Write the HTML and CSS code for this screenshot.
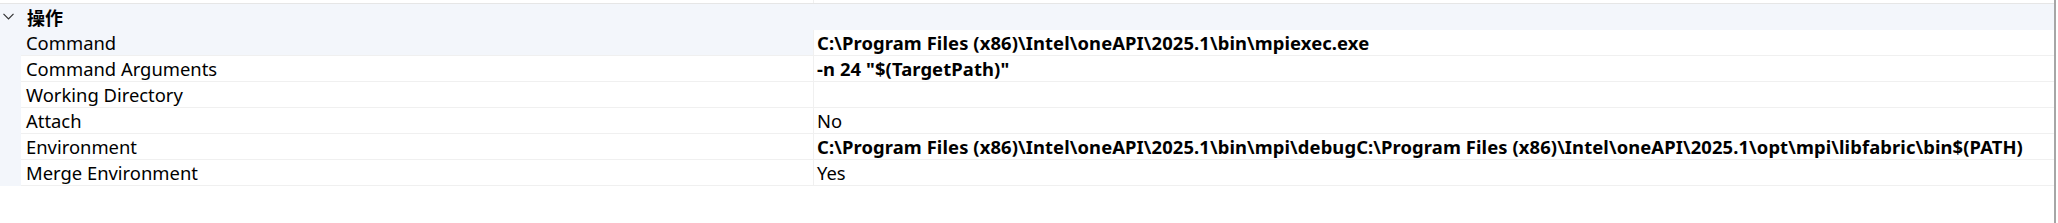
FILE: index.html
```html
<!DOCTYPE html>
<html>
<head>
    <title>Debugging Properties</title>
    <link rel="stylesheet" href="styles.css">
</head>
<body>
    <div class="panel">
        <div class="top-strip"><span class="strip-name"></span><span class="strip-value"></span></div>

        <div class="category">
            <svg class="chevron" width="11" height="7" viewBox="0 0 11 7">
                <path d="M0.5 0.8 L5.5 5.8 L10.5 0.8" fill="none" stroke="#333" stroke-width="1.2"/>
            </svg>
            <span class="category-title">操作</span>
        </div>

        <div class="props">
            <div class="gutter"></div>
            <div class="rows">
                <div class="row selected">
                    <div class="name">Command</div>
                    <div class="value strong">C:\Program Files (x86)\Intel\oneAPI\2025.1\bin\mpiexec.exe</div>
                </div>
                <div class="row">
                    <div class="name">Command Arguments</div>
                    <div class="value strong">-n 24 "$(TargetPath)"</div>
                </div>
                <div class="row">
                    <div class="name">Working Directory</div>
                    <div class="value"></div>
                </div>
                <div class="row">
                    <div class="name">Attach</div>
                    <div class="value">No</div>
                </div>
                <div class="row">
                    <div class="name">Environment</div>
                    <div class="value strong">C:\Program Files (x86)\Intel\oneAPI\2025.1\bin\mpi\debugC:\Program Files (x86)\Intel\oneAPI\2025.1\opt\mpi\libfabric\bin$(PATH)</div>
                </div>
                <div class="row">
                    <div class="name">Merge Environment</div>
                    <div class="value">Yes</div>
                </div>
            </div>
        </div>
    </div>
</body>
</html>
```

FILE: styles.css
```css
body { margin: 0; background: #fff; color: #000; font-family: "Noto Sans", "Noto Sans CJK SC", sans-serif; font-size: 18.4px; }

.panel { width: 2054px; height: 223px; border-right: 2px solid #a6a6a6; }

.top-strip { display: flex; height: 3px; border-bottom: 1px solid #e6e6e6; }
.strip-name { width: 813px; border-right: 1px solid #f0f0f0; }

.category { display: flex; align-items: center; height: 26px; background: #f3f6fb; }
.chevron { margin-left: 3px; margin-right: 13px; margin-top: -2px; }
.category-title { font-weight: bold; font-size: 18px; font-family: "Noto Sans CJK SC", sans-serif; }

.props { display: flex; }
.gutter { width: 21px; background: #f3f6fb; }
.rows { flex: 1; }

.row { display: flex; height: 25px; border-bottom: 1px solid #f0f0f0; line-height: 25px; }
.name { width: 787px; padding-left: 5px; border-right: 1px solid #f0f0f0; }
.value { flex: 1; padding-left: 3px; white-space: nowrap; }
.value.strong { font-weight: bold; letter-spacing: 0.1px; }
.row.selected .name { background: #f3f6fb; }
```
